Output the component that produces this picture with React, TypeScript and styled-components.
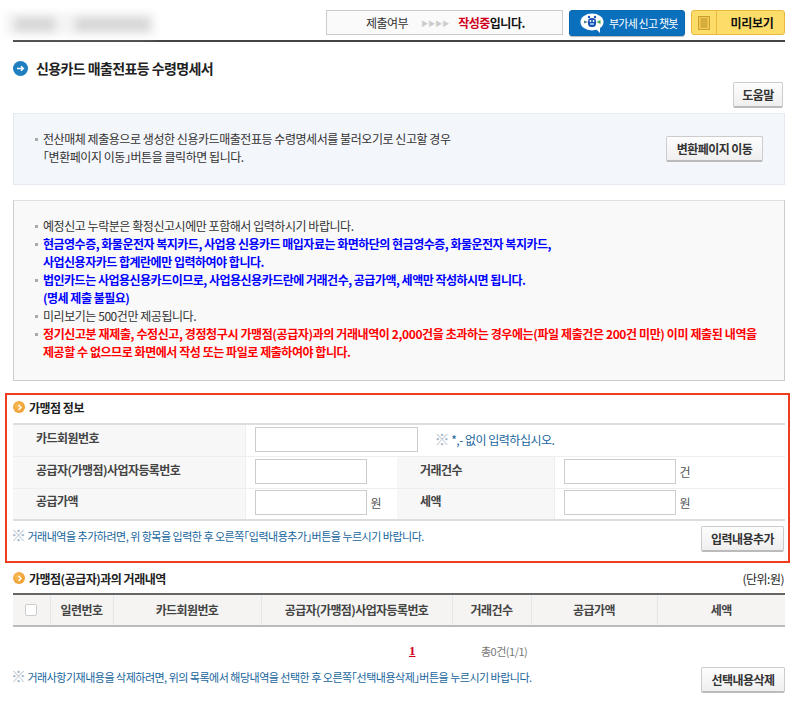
import styled, { createGlobalStyle } from "styled-components";

const GlobalStyle = createGlobalStyle`
  html, body {
    margin: 0;
    padding: 0;
    background: #fff;
    font-family: "Noto Sans CJK KR", "Noto Sans", sans-serif;
    font-size: 12px;
    color: #333;
    font-feature-settings: "halt";
  }
  * {
    box-sizing: border-box;
  }
`;

const Page = styled.div`
  width: 800px;
  height: 707px;
  overflow: hidden;
  padding: 10px 15px 0 13px;
`;

const TopBar = styled.div`
  display: flex;
  align-items: flex-start;
  height: 30px;
  border-bottom: 2px solid #444;
  box-sizing: content-box;
`;

const BlurredName = styled.div`
  display: flex;
  align-items: center;
  gap: 20px;
  width: 150px;
  height: 22px;
  margin: 3px auto 0 -8px;
  padding-left: 10px;
  background: #f4f4f4;
  filter: blur(4px);
`;

const BlurBlock = styled.div<{ $w: number }>`
  width: ${(p) => p.$w}px;
  height: 15px;
  background: #d8d8d8;
`;

const StatusBox = styled.div`
  width: 237px;
  height: 25px;
  display: flex;
  align-items: center;
  padding-left: 39px;
  border: 1px solid #ccc;
  background: #fafafa;
  font-size: 12px;
  line-height: 20px;
  letter-spacing: -0.5px;
  color: #333;
`;

const Arrows = styled.span`
  width: 37px;
  margin-left: 13px;
  color: #ccc;
  font-size: 7px;
  letter-spacing: 0;
`;

const StatusStrong = styled.b`
  color: #111;
`;

const StatusRed = styled.span`
  color: #d0021b;
`;

const ChatButton = styled.button`
  width: 116px;
  height: 26px;
  margin-left: 6px;
  padding: 0 0 0 10px;
  display: flex;
  align-items: center;
  gap: 4px;
  background: #0a6fbd;
  border: 1px solid #0b69b2;
  border-radius: 3px;
  box-shadow: 0 1px 1px #bbb;
  color: #fff;
  font: inherit;
  font-size: 11px;
  letter-spacing: -0.8px;
`;

const PreviewButton = styled.button`
  width: 94px;
  height: 25px;
  margin-left: 6px;
  padding: 0;
  display: flex;
  align-items: stretch;
  background: #fedc6a;
  border: 1px solid #e8b93c;
  border-radius: 3px;
  font: inherit;
  font-size: 12px;
  font-weight: 700;
  letter-spacing: -0.3px;
  color: #111;
`;

const PreviewIcon = styled.span`
  width: 25px;
  display: flex;
  align-items: center;
  justify-content: center;
  border-right: 1px solid #e8b93c;
`;

const PreviewLabel = styled.span`
  flex: 1;
  display: flex;
  align-items: center;
  justify-content: center;
  padding-left: 3px;
`;

const PageTitle = styled.h1`
  display: flex;
  align-items: center;
  gap: 8px;
  margin: 16px 0 0;
  height: 20px;
  font-size: 14px;
  font-weight: 700;
  line-height: 20px;
  color: #222;
  letter-spacing: -0.6px;
`;

const Button = styled.button<{ $w: number }>`
  width: ${(p) => p.$w}px;
  height: 26px;
  padding: 0;
  flex: none;
  background: linear-gradient(#fdfdfd, #efefef);
  border: 1px solid #ccc;
  border-bottom: 2px solid #bbb;
  border-radius: 2px;
  font: inherit;
  font-size: 12px;
  font-weight: 700;
  letter-spacing: -0.55px;
  color: #333;
  white-space: nowrap;
`;

const HelpRow = styled.div`
  display: flex;
  justify-content: flex-end;
  margin-top: 4px;
  padding-right: 2px;
  height: 31px;
`;

const InfoBox = styled.div`
  height: 72px;
  display: flex;
  align-items: center;
  justify-content: space-between;
  padding: 0 21px;
  background: #f3f6fb;
  border: 1px solid #e6e9f0;
`;

const NoticeBox = styled.div`
  height: 181px;
  margin-top: 15px;
  padding: 16px 21px 0;
  background: #f9f9f9;
  border: 1px solid #ccc;
  border-top-color: #e0e0e0;
`;

const NoticeList = styled.ul`
  margin: 0;
  padding: 0;
  list-style: none;
`;

const InfoList = styled(NoticeList)`
  margin-bottom: 2px;
`;

const NoticeItem = styled.li<{ $tone?: "blue" | "red" }>`
  position: relative;
  padding-left: 8px;
  font-size: 12px;
  line-height: 18px;
  white-space: nowrap;
  letter-spacing: ${(p) => (p.$tone === "blue" ? "-0.5px" : "-0.45px")};
  color: ${(p) => (p.$tone === "blue" ? "#0000ff" : p.$tone === "red" ? "#ff0000" : "#333")};
  font-weight: ${(p) => (p.$tone ? 700 : 400)};

  &::before {
    content: "";
    position: absolute;
    left: 0;
    top: 8px;
    width: 3px;
    height: 3px;
    background: #aaa;
  }
`;

const WideLine = styled.span`
  letter-spacing: -0.39px;
`;

const RedFrame = styled.section`
  height: 170px;
  margin: 12px -5px 0 -8px;
  padding: 2px 3px 0 6px;
  border: 2px solid #f03c1e;
`;

const SectionHead = styled.div`
  display: flex;
  align-items: center;
  justify-content: space-between;
  height: 20px;
`;

const SectionTitle = styled.h2`
  display: flex;
  align-items: center;
  gap: 4px;
  margin: 0;
  font-size: 12px;
  font-weight: 700;
  letter-spacing: -0.5px;
  color: #222;
`;

const Dot = styled.span`
  width: 12px;
  height: 12px;
  flex: none;
  display: flex;
  align-items: center;
  justify-content: center;
  border-radius: 50%;
  background: radial-gradient(circle at 40% 40%, #f8bd5a, #ec9420);
`;

const Unit = styled.span`
  padding-right: 1px;
  font-size: 12px;
  letter-spacing: -0.5px;
  color: #222;
`;

const FormTable = styled.table`
  width: 772px;
  margin-top: 6px;
  border-collapse: collapse;
  table-layout: fixed;
  border-top: 2px solid #ddd;
  border-bottom: 2px solid #ddd;

  tr {
    height: 32px;
    border-bottom: 1px solid #eee;
  }
`;

const FormHead = styled.th`
  padding: 0 0 6px 23px;
  background: #f7f7f7;
  border-right: 1px solid #eee;
  text-align: left;
  font-size: 12px;
  font-weight: 700;
  letter-spacing: -0.55px;
  color: #444;
`;

const FormCell = styled.td`
  padding: 0 0 2px 9px;
  white-space: nowrap;
  font-size: 12px;
  color: #555;
`;

const FieldLine = styled.div`
  display: flex;
  align-items: center;
  gap: 4px;
`;

const TextBox = styled.input<{ $w: number }>`
  width: ${(p) => p.$w}px;
  height: 25px;
  padding: 0;
  background: #fff;
  border: 1px solid #ccc;
`;

const Hint = styled.span`
  margin-left: 15px;
  font-size: 12px;
  letter-spacing: -0.5px;
  color: #17659c;
`;

const Mark = styled.span`
  margin-left: -2px;
  font-size: 15px;
  line-height: 1;
  color: #a9b8c8;
`;

const NoteRow = styled.div`
  display: flex;
  align-items: flex-start;
  justify-content: space-between;
  padding: 5px 1px 0 0;
`;

const NoteText = styled.p`
  margin: 0;
  padding-top: 1px;
  font-size: 11px;
  line-height: 18px;
  letter-spacing: -0.5px;
  color: #17659c;
  white-space: nowrap;
`;

const ListSection = styled.section`
  margin-top: 5px;
`;

const ListTable = styled.table`
  width: 772px;
  margin-top: 5px;
  border-collapse: collapse;
  table-layout: fixed;
  border-top: 2px solid #666;
  border-bottom: 2px solid #bbb;

  tr {
    height: 32px;
  }
`;

const ListHead = styled.th`
  padding: 0 0 2px;
  background: #f5f4f3;
  border-right: 1px solid #e6e6e6;
  text-align: center;
  font-size: 12px;
  font-weight: 700;
  letter-spacing: -0.6px;
  color: #444;

  &:last-child {
    border-right: 0;
  }
`;

const CheckBox = styled.span`
  display: inline-block;
  width: 12px;
  height: 12px;
  margin-top: 4px;
  background: #fff;
  border: 1px solid #ccc;
  border-radius: 2px;
`;

const Pager = styled.div`
  display: flex;
  align-items: center;
  height: 20px;
  margin-top: 14px;
  padding-left: 396px;
`;

const PageNumber = styled.a`
  width: 5px;
  font-family: "Liberation Serif", serif;
  font-size: 13px;
  font-weight: 700;
  color: #d0021b;
  text-decoration: underline;
`;

const PageTotal = styled.span`
  margin-left: 67px;
  font-size: 11px;
  letter-spacing: -0.5px;
  color: #777;
`;

const BottomRow = styled(NoteRow)`
  padding: 6px 0 0;
`;

function ChatIcon() {
  return (
    <svg width="25" height="22" viewBox="0 0 25 22" style={{ flex: "none" }}>
      <ellipse cx="12" cy="10" rx="11.5" ry="8.5" fill="#fff" />
      <path d="M16 17l4 4v-6z" fill="#fff" />
      <rect x="8" y="6" width="8" height="9" rx="3.5" fill="#1b4fb4" />
      <circle cx="9" cy="5" r="1.2" fill="#1b4fb4" />
      <circle cx="15" cy="5" r="1.2" fill="#1b4fb4" />
      <circle cx="10.5" cy="9" r="0.9" fill="#fff" />
      <circle cx="13.5" cy="9" r="0.9" fill="#fff" />
      <rect x="10" y="11" width="4" height="2" rx="1" fill="#8fc6ee" />
      <path d="M4 8.5l4 1.5-4 1.5z" fill="#4a7f8f" />
      <path d="M20.5 8l-4 2 4 2z" fill="#3fa548" />
    </svg>
  );
}

function DocIcon() {
  return (
    <svg width="12" height="14" viewBox="0 0 12 14">
      <rect x="0.5" y="0.5" width="11" height="13" fill="#f5cb55" stroke="#c9a02c" />
      <path d="M2.5 3h7M2.5 5h7M2.5 7h7M2.5 9h7M2.5 11h7" stroke="#b58f24" strokeWidth="1" />
    </svg>
  );
}

function TitleIcon() {
  return (
    <svg width="15" height="15" viewBox="0 0 15 15" style={{ flex: "none" }}>
      <circle cx="7.5" cy="7.5" r="7.5" fill="#1f7fc0" />
      <path d="M4 7.5h6M8 5.3l2.4 2.2L8 9.7" fill="none" stroke="#fff" strokeWidth="1.4" />
    </svg>
  );
}

function SectionDot() {
  return (
    <Dot>
      <svg width="7" height="7" viewBox="0 0 7 7">
        <path d="M2.5 1l2.5 2.5L2.5 6" fill="none" stroke="#fff" strokeWidth="1.4" />
      </svg>
    </Dot>
  );
}

const listColumns = [
  { label: "", width: 37 },
  { label: "일련번호", width: 63 },
  { label: "카드회원번호", width: 148 },
  { label: "공급자(가맹점)사업자등록번호", width: 191 },
  { label: "거래건수", width: 79 },
  { label: "공급가액", width: 126 },
  { label: "세액", width: 128 },
];

export default function App() {
  return (
    <Page>
      <GlobalStyle />
      <TopBar>
        <BlurredName>
          <BlurBlock $w={40} />
          <BlurBlock $w={75} />
        </BlurredName>
        <StatusBox>
          제출여부
          <Arrows>▶▶▶▶</Arrows>
          <StatusStrong>
            <StatusRed>작성중</StatusRed>입니다.
          </StatusStrong>
        </StatusBox>
        <ChatButton>
          <ChatIcon />
          부가세 신고 챗봇
        </ChatButton>
        <PreviewButton>
          <PreviewIcon>
            <DocIcon />
          </PreviewIcon>
          <PreviewLabel>미리보기</PreviewLabel>
        </PreviewButton>
      </TopBar>

      <PageTitle>
        <TitleIcon />
        신용카드 매출전표등 수령명세서
      </PageTitle>

      <HelpRow>
        <Button $w={50}>도움말</Button>
      </HelpRow>

      <InfoBox>
        <InfoList>
          <NoticeItem>
            전산매체 제출용으로 생성한 신용카드매출전표등 수령명세서를 불러오기로 신고할 경우
            <br />
            「변환페이지 이동」버튼을 클릭하면 됩니다.
          </NoticeItem>
        </InfoList>
        <Button $w={97}>변환페이지 이동</Button>
      </InfoBox>

      <NoticeBox>
        <NoticeList>
          <NoticeItem>예정신고 누락분은 확정신고시에만 포함해서 입력하시기 바랍니다.</NoticeItem>
          <NoticeItem $tone="blue">
            현금영수증, 화물운전자 복지카드, 사업용 신용카드 매입자료는 화면하단의 현금영수증, 화물운전자 복지카드,
            <br />
            사업신용자카드 합계란에만 입력하여야 합니다.
          </NoticeItem>
          <NoticeItem $tone="blue">
            법인카드는 사업용신용카드이므로, 사업용신용카드란에 거래건수, 공급가액, 세액만 작성하시면 됩니다.
            <br />
            (명세 제출 불필요)
          </NoticeItem>
          <NoticeItem>미리보기는 500건만 제공됩니다.</NoticeItem>
          <NoticeItem $tone="red">
            <WideLine>
              정기신고분 재제출, 수정신고, 경정청구시 가맹점(공급자)과의 거래내역이 2,000건을 초과하는 경우에는(파일 제출건은 200건 미만) 이미 제출된 내역을
            </WideLine>
            <br />
            제공할 수 없으므로 화면에서 작성 또는 파일로 제출하여야 합니다.
          </NoticeItem>
        </NoticeList>
      </NoticeBox>

      <RedFrame>
        <SectionHead>
          <SectionTitle>
            <SectionDot />
            가맹점 정보
          </SectionTitle>
        </SectionHead>
        <FormTable>
          <colgroup>
            <col width={232} />
            <col width={152} />
            <col width={157} />
            <col width={231} />
          </colgroup>
          <tbody>
            <tr>
              <FormHead>카드회원번호</FormHead>
              <FormCell colSpan={3}>
                <FieldLine>
                  <TextBox $w={163} />
                  <Hint>
                    <Mark>※</Mark> *,- 없이 입력하십시오.
                  </Hint>
                </FieldLine>
              </FormCell>
            </tr>
            <tr>
              <FormHead>공급자(가맹점)사업자등록번호</FormHead>
              <FormCell>
                <TextBox $w={112} />
              </FormCell>
              <FormHead>거래건수</FormHead>
              <FormCell>
                <FieldLine>
                  <TextBox $w={112} />건
                </FieldLine>
              </FormCell>
            </tr>
            <tr>
              <FormHead>공급가액</FormHead>
              <FormCell>
                <FieldLine>
                  <TextBox $w={112} />원
                </FieldLine>
              </FormCell>
              <FormHead>세액</FormHead>
              <FormCell>
                <FieldLine>
                  <TextBox $w={112} />원
                </FieldLine>
              </FormCell>
            </tr>
          </tbody>
        </FormTable>
        <NoteRow>
          <NoteText>
            <Mark>※</Mark> 거래내역을 추가하려면, 위 항목을 입력한 후 오른쪽「입력내용추가」버튼을 누르시기 바랍니다.
          </NoteText>
          <Button $w={83}>입력내용추가</Button>
        </NoteRow>
      </RedFrame>

      <ListSection>
        <SectionHead>
          <SectionTitle>
            <SectionDot />
            가맹점(공급자)과의 거래내역
          </SectionTitle>
          <Unit>(단위:원)</Unit>
        </SectionHead>
        <ListTable>
          <colgroup>
            {listColumns.map((c, i) => (
              <col key={i} width={c.width} />
            ))}
          </colgroup>
          <thead>
            <tr>
              {listColumns.map((c, i) => (
                <ListHead key={i}>{i === 0 ? <CheckBox /> : c.label}</ListHead>
              ))}
            </tr>
          </thead>
        </ListTable>
        <Pager>
          <PageNumber>1</PageNumber>
          <PageTotal>총0건(1/1)</PageTotal>
        </Pager>
        <BottomRow>
          <NoteText>
            <Mark>※</Mark> 거래사항기재내용을 삭제하려면, 위의 목록에서 해당내역을 선택한 후 오른쪽「선택내용삭제」버튼을 누르시기 바랍니다.
          </NoteText>
          <Button $w={84}>선택내용삭제</Button>
        </BottomRow>
      </ListSection>
    </Page>
  );
}
